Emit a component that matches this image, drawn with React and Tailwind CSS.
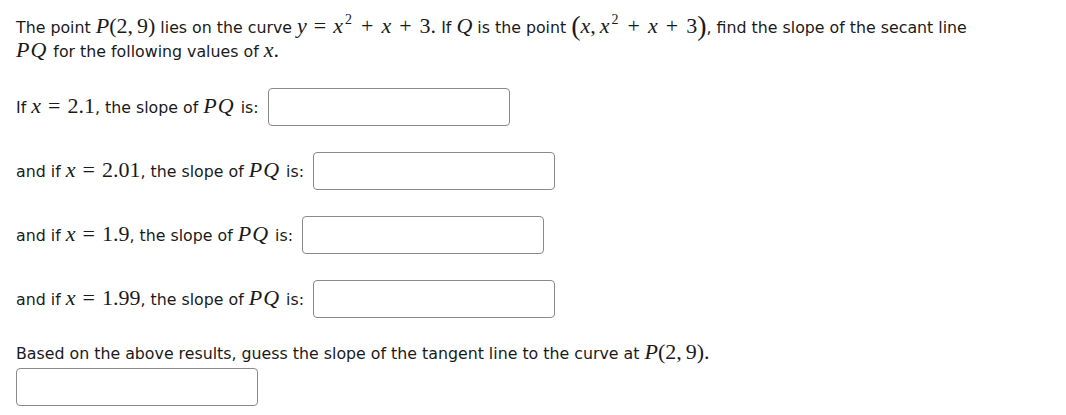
import React from "react";

const mf = {
  fontFamily: '"Liberation Serif", "Times New Roman", serif',
  fontStretch: "normal",
};

function M({ children }) {
  return (
    <span className="text-[22px] leading-none whitespace-nowrap" style={mf}>
      {children}
    </span>
  );
}
const V = ({ children }) => <span className="italic">{children}</span>;
const PQ = () => (
  <span className="italic">
    P<span className="ml-[1px] mr-[2px]">Q</span>
  </span>
);
const Op = ({ children }) => <span className="mx-[8px]">{children}</span>;
const Rel = ({ children }) => <span className="mx-[7px]">{children}</span>;
const Sup = ({ children }) => (
  <span className="text-[14px] relative -top-[9px] ml-[2px] mr-[1px]">{children}</span>
);
const Big = ({ children }) => (
  <span className="text-[28px] relative top-[2px]">{children}</span>
);

function Input({ className = "" }) {
  return (
    <input
      type="text"
      className={
        "h-[38px] w-[242px] rounded-[4px] border border-[#8a8a8a] bg-white outline-none " +
        className
      }
    />
  );
}

function Row({ pre, val }) {
  return (
    <div className="flex items-center h-[38px]">
      <span>
        {pre} <M><V>x</V><Rel>=</Rel>{val}</M>, the slope of{" "}
        <M><PQ /></M> is:
      </span>
      <Input className="ml-[9px]" />
    </div>
  );
}

export default function App() {
  return (
    <div
      className="bg-white text-[#1a1a1a] text-[15.8px] leading-[23px] pl-[16px] pt-[10px] w-[1066px] h-[415px]"
      style={{ fontFamily: '"DejaVu Sans", Verdana, sans-serif' }}
    >
      <p>
        The point <M><V>P</V>(2,<span className="ml-[4px]">9)</span></M> lies on the curve{" "}
        <M>
          <V>y</V><Rel>=</Rel><V>x</V><Sup>2</Sup><Op>+</Op><V>x</V><Op>+</Op>3.
        </M>{" "}
        If <M><V>Q</V></M> is the point{" "}
        <M>
          <Big>(</Big>
          <V>x</V>,<span className="ml-[4px]"></span><V>x</V><Sup>2</Sup><Op>+</Op><V>x</V><Op>+</Op>3
          <Big>)</Big>
        </M>
        , find the slope of the secant line
        <br />
        <M><PQ /></M> for the following values of <M><V>x</V>.</M>
      </p>
      <div className="mt-[25px] flex flex-col gap-[26px]">
        <Row pre="If" val="2.1" />
        <Row pre="and if" val="2.01" />
        <Row pre="and if" val="1.9" />
        <Row pre="and if" val="1.99" />
      </div>
      <p className="mt-[23px]">
        Based on the above results, guess the slope of the tangent line to the curve at{" "}
        <M><V>P</V>(2,<span className="ml-[4px]">9).</span></M>
      </p>
      <div className="mt-[3px]">
        <Input />
      </div>
    </div>
  );
}
